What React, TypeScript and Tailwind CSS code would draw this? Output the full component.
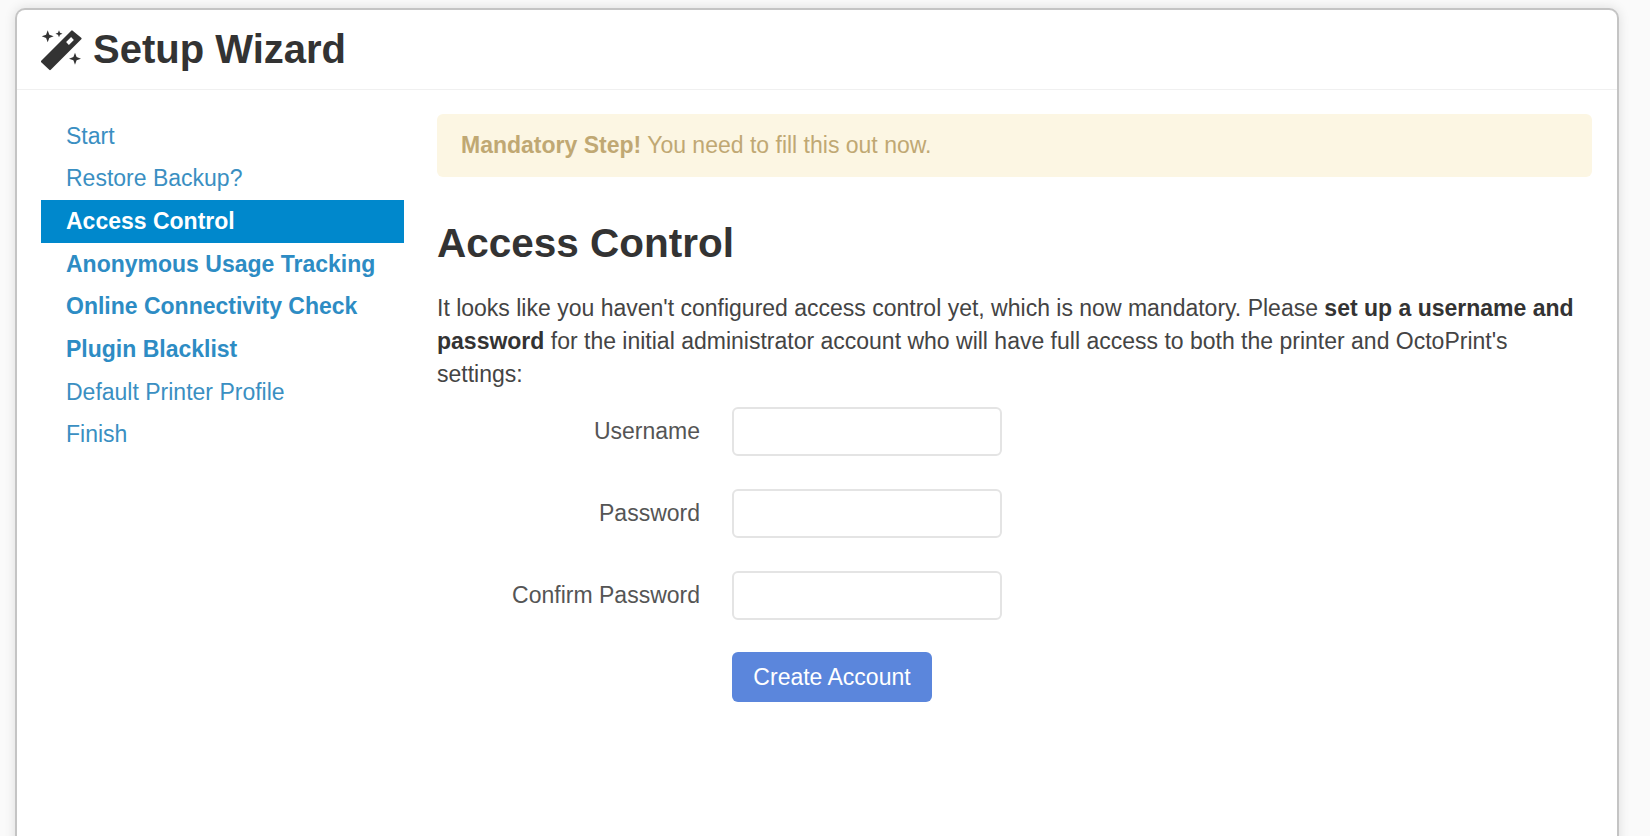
const steps = [
  { label: 'Start' },
  { label: 'Restore Backup?' },
  { label: 'Access Control', active: true },
  { label: 'Anonymous Usage Tracking', bold: true },
  { label: 'Online Connectivity Check', bold: true },
  { label: 'Plugin Blacklist', bold: true },
  { label: 'Default Printer Profile' },
  { label: 'Finish' },
];

const fields = ['Username', 'Password', 'Confirm Password'];

const WandIcon = () => (
  <svg viewBox="41 27 42 42" className="h-[42px] w-[42px] shrink-0 text-[#333]" fill="currentColor">
    <path
      d="M72 29.5 L80.5 36.5 L50 67 L42 59.5 Z"
      stroke="currentColor"
      strokeWidth="2.2"
      strokeLinejoin="round"
    />
    <path d="M73.9 37.9 L71.1 35.1 L66.1 40.1 L68.9 42.9 Z" fill="#fff" />
    <path d="M47.7 28.3 L49.3 32.7 L53.7 34.3 L49.3 35.9 L47.7 40.3 L46.1 35.9 L41.7 34.3 L46.1 32.7 Z" />
    <path d="M59 28.2 L60 30.7 L62.5 31.7 L60 32.7 L59 35.2 L58 32.7 L55.5 31.7 L58 30.7 Z" />
    <path d="M75 50.7 L76.6 55.1 L81 56.7 L76.6 58.3 L75 62.7 L73.4 58.3 L69 56.7 L73.4 55.1 Z" />
  </svg>
);

export default function App() {
  return (
    <div className="h-[836px] overflow-hidden bg-[#fafafa] pt-2 pr-[31px] pl-[15px] font-['Liberation_Sans',Arial,sans-serif] text-[#333]">
      <div className="h-[860px] rounded-t-[10px] border-x-2 border-t-2 border-[#c4c4c4] bg-white shadow-[0_0_12px_rgba(0,0,0,0.12)]">
        <div className="flex h-[80px] items-center gap-[10px] border-b border-[#f0f0f0] pl-[24px]">
          <WandIcon />
          <h1 className="pb-[2px] text-[40px] leading-none font-bold">Setup Wizard</h1>
        </div>

        <div className="flex gap-[33px] pt-[24px] pr-[25px] pl-[24px]">
          <ul className="w-[363px] shrink-0 pt-[0.5px] text-[23px] text-[#3a8fc2]">
            {steps.map((step) => (
              <li
                key={step.label}
                className={`flex h-[42.7px] items-center pl-[25px] ${
                  step.active ? 'bg-[#0088cc] font-bold text-white' : step.bold ? 'font-bold text-[#2d8cc4]' : ''
                }`}
              >
                {step.label}
              </li>
            ))}
          </ul>

          <div className="min-w-0 flex-1">
            <div className="flex h-[63px] items-center rounded-[6px] bg-[#fcf6e3] pl-6 text-[23px] text-[#c0a873]">
              <p>
                <strong>Mandatory Step!</strong> You need to fill this out now.
              </p>
            </div>

            <h2 className="mt-[40px] text-[40.5px] leading-[52px] font-bold">Access Control</h2>

            <p className="mt-[23px] text-[23px] leading-[33px] text-[#444]">
              It looks like you haven't configured access control yet, which is now mandatory. Please{' '}
              <strong className="text-[#333]">set up a username and password</strong> for the initial administrator
              account who will have full access to both the printer and OctoPrint's settings:
            </p>

            <form className="mt-[16px] flex flex-col gap-[33px]">
              {fields.map((field) => (
                <div key={field} className="flex items-center gap-[32px]">
                  <label className="w-[263px] text-right text-[23px] text-[#555]">{field}</label>
                  <input
                    type={field === 'Username' ? 'text' : 'password'}
                    className="h-[49px] w-[270px] rounded-[6px] border-2 border-[#e4e4e4] bg-white"
                  />
                </div>
              ))}
              <div className="-mt-px pl-[295px]">
                <button
                  type="button"
                  className="h-[50px] w-[200px] rounded-[6px] bg-[#5b86dc] text-[23px] text-white"
                >
                  Create Account
                </button>
              </div>
            </form>
          </div>
        </div>
      </div>
    </div>
  );
}
